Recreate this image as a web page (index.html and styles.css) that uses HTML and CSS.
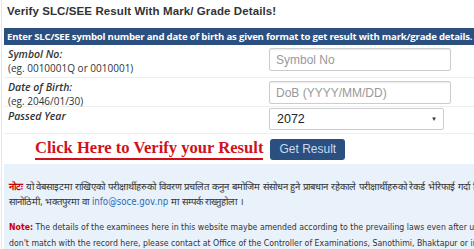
FILE: index.html
```html
<!DOCTYPE html>
<html>
<head>
<meta charset="utf-8">
<link rel="stylesheet" href="styles.css">
</head>
<body>
<div class="page">
  <h1 class="title">Verify SLC/SEE Result With Mark/ Grade Details!</h1>
  <div class="bar">Enter SLC/SEE symbol number and date of birth as given format to get result with mark/grade details.</div>
  <div class="row row-sym">
    <div class="label"><em>Symbol No:</em><br>(eg. 0010001Q or 0010001)</div>
    <div class="field"><input class="input" placeholder="Symbol No"></div>
  </div>
  <div class="row row-dob">
    <div class="label"><em>Date of Birth:</em><br>(eg. 2046/01/30)</div>
    <div class="field"><input class="input" placeholder="DoB (YYYY/MM/DD)"></div>
  </div>
  <div class="row row-year">
    <div class="label"><em>Passed Year</em></div>
    <div class="field field-year"><div class="select">2072<span class="caret">▼</span></div></div>
  </div>
  <div class="action">
    <span class="verify">Click Here to Verify your Result</span>
    <span class="btn">Get Result</span>
  </div>
  <div class="notes">
    <p class="np"><b class="red">नोटः</b> यो वेबसाइटमा राखिएको परीक्षार्थीहरुको विवरण प्रचलित कनुन बमोजिम संसोधन हुने प्राबधान रहेकाले परीक्षार्थीहरुको रेकर्ड भेरिफाई गर्दा मिलान नभएमा परीक्षा नियन्त्रण कार्यालय<br>सानोठिमी, भक्तपुरमा वा <span class="mail">info@soce.gov.np</span> मा सम्पर्क राख्नुहोला ।</p>
    <p class="en"><b class="red">Note:</b> The details of the examinees here in this website maybe amended according to the prevailing laws even after uploading. If these<br>don't match with the record here, please contact at Office of the Controller of Examinations, Sanothimi, Bhaktapur or info@soce.gov.np</p>
  </div>
</div>
</body>
</html>
```
FILE: styles.css
```css
html, body { margin: 0; padding: 0; background: #fff; }
body { width: 474px; height: 249px; overflow: hidden; }
.page { padding: 0 0 0 2px; border-left: 1px solid #e6e6e6; margin-left: 1px; }
.title {
  font-family: "Liberation Sans", Arial, sans-serif;
  font-size: 11.5px; font-weight: bold; color: #333;
  margin: 0; padding: 5px 0 0 3px; height: 23px; box-sizing: border-box;
  letter-spacing: 0.1px;
}
.bar {
  background: #2b4f7e; color: #fff;
  font-family: "Open Sans", sans-serif; font-weight: bold; font-size: 9.6px;
  height: 17px; line-height: 17px; padding-left: 3px; white-space: nowrap; overflow: hidden;
  letter-spacing: -0.2px;
  margin-top: 5px;
}
.row {
  display: flex; border-bottom: 1px solid #eee; box-sizing: border-box;
}
.row-sym { height: 33px; }
.row-dob { height: 29px; }
.row-year { height: 27px; }
.label {
  font-family: "Open Sans", sans-serif; font-size: 10px; color: #333; line-height: 14px;
  width: 265px; padding: 2px 0 0 4px; box-sizing: border-box;
}
.label em { font-style: italic; font-weight: 600; font-size: 10.5px; }
.field { padding-top: 3px; }
.field-year { padding-top: 1px; }
.input {
  display: block; width: 182px; height: 23px; box-sizing: border-box;
  border: 1px solid #ccc; border-radius: 2px; box-shadow: inset 0 1px 1px rgba(0,0,0,0.08);
  font-family: "Liberation Sans", Arial, sans-serif; font-size: 12px; padding: 0 6px; margin: 0;
}
.input::placeholder { color: #999; }
.select {
  width: 175px; height: 22px; box-sizing: border-box; border: 1px solid #ccc; border-radius: 2px;
  font-family: "Liberation Sans", Arial, sans-serif; font-size: 12.5px; color: #222;
  display: flex; align-items: center; justify-content: space-between; padding: 0 6px 0 7px;
}
.caret { font-size: 6px; color: #333; }
.action { display: flex; align-items: center; height: 30px; padding-left: 31px; }
.verify {
  font-family: "Liberation Serif", "Times New Roman", serif; font-weight: bold; font-size: 16.6px;
  color: #d0111b; border-bottom: 2px solid #d0111b; line-height: 18px; padding-bottom: 1px;
}
.btn {
  margin-left: 7px; background: #2b4f7e; color: #c9dbf2; border-radius: 3px;
  font-family: "Liberation Sans", Arial, sans-serif; font-size: 12px;
  padding: 0 9px; height: 21px; line-height: 21px;
}
.notes {
  background: #e9f1fb; padding: 15px 0 10px 5px; height: 100px;
  font-family: "DejaVu Sans Condensed", "DejaVu Sans", sans-serif; color: #333; overflow: hidden;
}
.notes p { margin: 0; white-space: nowrap; }
.np { font-size: 9.6px; line-height: 15px; margin-bottom: 10px !important; }
.en { font-size: 8.7px; line-height: 16px; }
.red { color: #c00; }
.mail { color: #2a6bb8; }
```
